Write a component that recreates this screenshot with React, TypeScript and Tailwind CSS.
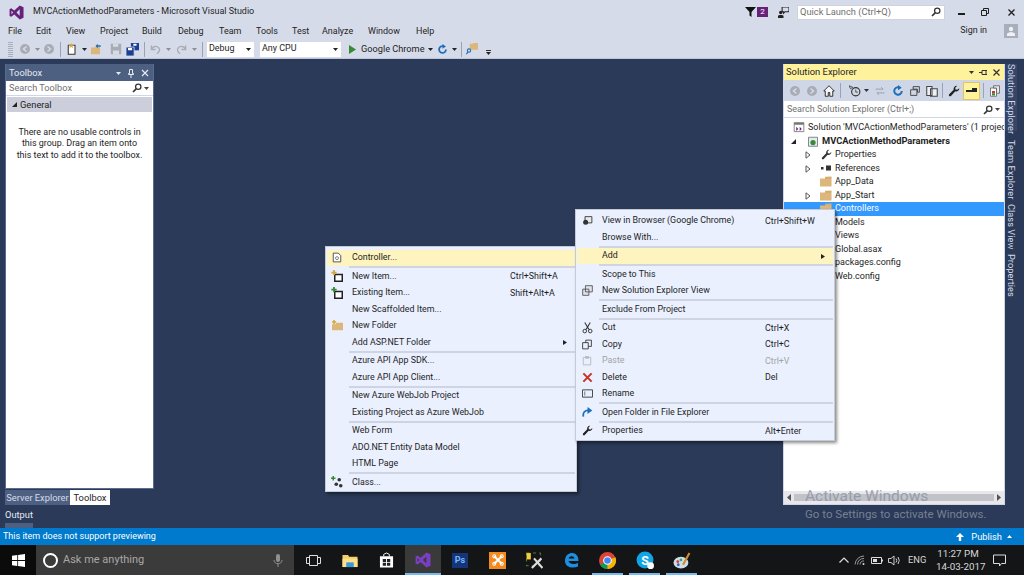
import React from "react";

const S = ({ w = 16, h = 16, vb = "0 0 16 16", className = "", children }: { w?: number; h?: number; vb?: string; className?: string; children?: React.ReactNode }) => (
  <svg width={w} height={h} viewBox={vb} className={"shrink-0 " + className}>{children}</svg>
);

const VSLogo = ({ s = 16, c = "#68217a" }: { s?: number; c?: string }) => (
  <S w={s} h={s}>
    <path fillRule="evenodd" fill={c} d="M11.5 0.5 L15.5 2.3 V13.7 L11.5 15.5 L5.6 10.2 L2.4 12.6 L0.6 11.6 V4.4 L2.4 3.4 L5.6 5.8 Z M11.4 4.6 L8 8 L11.4 11.4 Z M2.6 6.2 V9.8 L4.4 8 Z" />
  </S>
);

const Drop = ({ c = "#444" }: { c?: string }) => (
  <S w={5} h={3} vb="0 0 5 3"><path d="M0 0H5L2.5 3Z" fill={c} /></S>
);

const Magnifier = ({ s = 11, c = "#444" }: { s?: number; c?: string }) => (
  <S w={s} h={s} vb="0 0 12 12">
    <circle cx="7.5" cy="4.5" r="3.2" fill="none" stroke={c} strokeWidth="1.5" />
    <path d="M5 7L1.2 10.8" stroke={c} strokeWidth="2" />
  </S>
);

const Wrench = ({ s = 12, c = "#333" }: { s?: number; c?: string }) => (
  <S w={s} h={s}>
    <path d="M15 4.2a4 4 0 0 1-5.3 4.2L4 14.5a1.6 1.6 0 0 1-2.4-2.3L7.6 6.3A4 4 0 0 1 12 1.2L9.6 3.6l.4 2.4 2.4.4z" fill={c} />
  </S>
);

const Folder = ({ c = "#dcb67a" }: { c?: string }) => (
  <S w={12} h={11} vb="0 0 12 11">
    <path d="M0 2.5H5V0.8L11.5 0.5V10.5H0Z" fill={c} />
    <path d="M5 1.2H11.5V2.6H5Z" fill="#c9a164" opacity="0.5" />
  </S>
);

const Tri = () => (
  <S w={6} h={8} vb="0 0 6 8"><path d="M1 0.8L5 4L1 7.2Z" fill="#fff" stroke="#555" /></S>
);

const Sep = () => <div className="w-px h-[15px] bg-[#9aa3b6] shrink-0" />;

const Slot = ({ w, children }: { w: number; children?: React.ReactNode }) => (
  <div className="flex items-center justify-center shrink-0" style={{ width: w }}>{children}</div>
);

const CircleArrow = ({ dir = "l" }: { dir?: "l" | "r" }) => (
  <S w={10} h={10} vb="0 0 10 10">
    <circle cx="5" cy="5" r="5" fill="#a8acb5" />
    <path d={dir === "l" ? "M6.5 2.5L3.5 5L6.5 7.5" : "M3.5 2.5L6.5 5L3.5 7.5"} stroke="#d6dbe9" strokeWidth="1.5" fill="none" />
  </S>
);

const TopMenu = () => {
  const items: [string, number][] = [["File", 28], ["Edit", 30], ["View", 34], ["Project", 42], ["Build", 36], ["Debug", 41], ["Team", 37], ["Tools", 36], ["Test", 30], ["Analyze", 46], ["Window", 48], ["Help", 30]];
  return (
    <div className="flex h-[15px] pl-[8px] items-center">
      {items.map(([t, w]) => (
        <div key={t} className="text-[#1e1e1e] leading-[15px]" style={{ width: w }}>{t}</div>
      ))}
    </div>
  );
};

const Toolbar = () => (
  <div className="flex items-center h-[20px] pl-[8px]">
    <div className="w-[5px] h-[15px] bg-[repeating-linear-gradient(0deg,#a9aebb_0,#a9aebb_1px,transparent_1px,transparent_2px)] shrink-0" />
    <Slot w={5} />
    <Slot w={13}><CircleArrow /></Slot>
    <Slot w={12}><Drop c="#8e8e95" /></Slot>
    <Slot w={12}><CircleArrow dir="r" /></Slot>
    <Slot w={5} />
    <Sep />
    <Slot w={5} />
    <Slot w={12}>
      <S w={12} h={12}>
        <path d="M3 3H12V15H3Z" fill="#fff" stroke="#333" strokeWidth="1.4" />
        <path d="M7 0L8 2.5H11L8.6 4L9.6 7L7 5L4.4 7L5.4 4L3 2.5H6Z" fill="#d9a63a" />
      </S>
    </Slot>
    <Slot w={13}><Drop c="#222" /></Slot>
    <Slot w={12}>
      <S w={12} h={12}>
        <path d="M0 6H5L6 5H12V15H0Z" fill="#dcb67a" />
        <path d="M6 4L9 1V3H13V5H9V7Z" fill="#1c6fb8" />
      </S>
    </Slot>
    <Slot w={7} />
    <Slot w={12}>
      <S w={12} h={12}>
        <path d="M1 1H15V15H1Z" fill="#a8acb5" />
        <path d="M4 1H11V5H4ZM4 10H12V15H4Z" fill="#d6dbe9" />
      </S>
    </Slot>
    <Slot w={4} />
    <Slot w={13}>
      <S w={13} h={13}>
        <path d="M6 0H16V9H6Z" fill="#1c3f94" />
        <path d="M0 5H10V16H0Z" fill="#1c3f94" stroke="#d6dbe9" />
        <path d="M2.5 6H7.5V9H2.5ZM9 1H13V3.5H9Z" fill="#fff" />
      </S>
    </Slot>
    <Slot w={5} />
    <Sep />
    <Slot w={5} />
    <Slot w={11}>
      <S w={11} h={11}><path d="M2 2V8H8M2 8C4 3 10 2 13 6C15 9 13 12 10 14" fill="none" stroke="#a8acb5" strokeWidth="2" /></S>
    </Slot>
    <Slot w={15}><Drop c="#8e8e95" /></Slot>
    <Slot w={11}>
      <S w={11} h={11}><path d="M14 2V8H8M14 8C12 3 6 2 3 6C1 9 3 12 6 14" fill="none" stroke="#a8acb5" strokeWidth="2" /></S>
    </Slot>
    <Slot w={15}><Drop c="#8e8e95" /></Slot>
    <Sep />
    <Slot w={4} />
    <div className="w-[47px] h-[15px] bg-white flex items-center justify-between pl-[2px] pr-[3px] shrink-0 text-[#1e1e1e]"><span>Debug</span><Drop c="#222" /></div>
    <Slot w={6} />
    <div className="w-[81px] h-[15px] bg-white flex items-center justify-between pl-[2px] pr-[3px] shrink-0 text-[#1e1e1e]"><span>Any CPU</span><Drop c="#222" /></div>
    <Slot w={8} />
    <S w={7} h={9} vb="0 0 7 9"><path d="M0 0L7 4.5L0 9Z" fill="#388a34" /></S>
    <Slot w={5} />
    <span className="w-[64px] shrink-0 text-[#1e1e1e] whitespace-nowrap text-[9.2px]">Google Chrome</span>
    <Slot w={11}><Drop c="#222" /></Slot>
    <Slot w={12}>
      <S w={11} h={11}><path d="M13 8a5 5 0 1 1-3.5-4.8" fill="none" stroke="#1c6fb8" strokeWidth="2.6" /><path d="M8 0L13 3.5L8 7Z" fill="#1c6fb8" /></S>
    </Slot>
    <Slot w={13}><Drop c="#222" /></Slot>
    <Sep />
    <Slot w={4} />
    <Slot w={12}>
      <S w={12} h={12}>
        <path d="M5 1H9L10 0H16V9H5Z" fill="#dcb67a" />
        <circle cx="4" cy="10" r="2.2" fill="none" stroke="#1c6fb8" strokeWidth="1.4" />
        <path d="M2.5 12L0.5 15" stroke="#1c6fb8" strokeWidth="1.6" />
      </S>
    </Slot>
    <Slot w={7} />
    <div className="flex flex-col items-center gap-[1px] pt-[7px] w-[6px] shrink-0">
      <div className="w-[5px] h-px bg-[#333]" />
      <Drop c="#222" />
    </div>
  </div>
);

const Chrome = () => (
  <div className="h-[59px] bg-[#d6dbe9] shrink-0 border-b border-[#bdc5d8] text-[8.95px] relative">
    <div className="h-[24px] flex items-center">
      <div className="w-[33px] pl-[9px] pt-[1px]"><VSLogo s={15} /></div>
      <div className="text-[#1e1e1e] w-[712px] whitespace-nowrap">MVCActionMethodParameters - Microsoft Visual Studio</div>
      <S w={11} h={10} vb="0 0 11 10"><path d="M0 0H11L6.5 5V10L4.5 8.5V5Z" fill="#111" /></S>
      <div className="w-[11px] h-[10px] bg-[#68217a] text-white text-[8px] leading-[10px] text-center ml-[1px]">2</div>
      <div className="w-[10px]" />
      <S w={11} h={11}>
        <path d="M6 0H16V7H10L8 9V7H6Z" fill="none" stroke="#222" strokeWidth="1.5" />
        <circle cx="4" cy="8" r="2.5" fill="#222" />
        <path d="M0 16V13C0 11 8 11 8 13V16Z" fill="#222" />
      </S>
      <div className="w-[8px]" />
      <div className="w-[148px] h-[15px] bg-white border border-[#cfd3dd] flex items-center justify-between pl-[2px] pr-[3px] text-[#717171] text-[9.3px]">
        <span>Quick Launch (Ctrl+Q)</span>
        <Magnifier s={10} c="#333" />
      </div>
      <div className="w-[9px]" />
      <Slot w={14}><div className="w-[7px] h-[2px] bg-[#1e1e1e] mt-[4px]" /></Slot>
      <Slot w={10} />
      <Slot w={14}>
        <S w={8} h={8} vb="0 0 8 8"><path d="M2.5 2.5V0.5H7.5V5.5H5.5M0.5 2.5H5.5V7.5H0.5Z" fill="none" stroke="#1e1e1e" /></S>
      </Slot>
      <Slot w={12} />
      <Slot w={14}>
        <S w={7} h={7} vb="0 0 7 7"><path d="M0.5 0.5L6.5 6.5M6.5 0.5L0.5 6.5" stroke="#1e1e1e" strokeWidth="1.3" /></S>
      </Slot>
    </div>
    <TopMenu />
    <Toolbar />
    <div className="absolute right-[6px] top-[24px] flex items-center gap-[17px]">
      <span className="text-[#1e1e1e]">Sign in</span>
      <div className="w-[14px] h-[14px] bg-[#a9aebb] flex items-center justify-center">
        <S w={10} h={10} vb="0 0 10 10"><circle cx="5" cy="3" r="2.2" fill="#eef0f5" /><path d="M1 10V7.5Q5 4.5 9 7.5V10Z" fill="#eef0f5" /></S>
      </div>
    </div>
  </div>
);

const Toolbox = () => (
  <div className="w-[154px] pl-[5px] pt-[5px] shrink-0 flex flex-col">
    <div className="h-[425px] flex flex-col bg-white border border-[#5a6c8e] border-t-0 text-[8.95px]">
      <div className="h-[17px] bg-[#4d6082] flex items-center pl-[3px] pr-[4px] pt-px text-[#e6eaf3] shrink-0 text-[9.3px]">
        <span className="flex-1">Toolbox</span>
        <Drop c="#e6eaf3" />
        <S w={8} h={9} vb="0 0 8 9" className="ml-[6px]"><path d="M2.5 0.5H5.5V4.5H6.5V5.5H1.5V4.5H2.5ZM4 5.5V9" fill="none" stroke="#e6eaf3" /></S>
        <S w={8} h={8} vb="0 0 8 8" className="ml-[6px]"><path d="M1 1L7 7M7 1L1 7" stroke="#e6eaf3" strokeWidth="1.2" /></S>
      </div>
      <div className="h-[15px] bg-white flex items-center pl-[3px] pr-[4px] border-b border-[#cfd6e5] text-[#717171] shrink-0 text-[9.2px]">
        <span className="flex-1">Search Toolbox</span>
        <Magnifier s={10} c="#333" />
        <div className="ml-[2px]"><Drop c="#444" /></div>
      </div>
      <div className="h-[15px] mt-[1px] mx-px bg-[#ccceDB] flex items-center pl-[5px] text-[#1e1e1e] shrink-0 text-[9.3px]">
        <S w={5} h={5} vb="0 0 5 5"><path d="M5 0V5H0Z" fill="#222" /></S>
        <span className="ml-[3px]">General</span>
      </div>
      <div className="pt-[15px] text-center text-[#1e1e1e] leading-[11.4px] whitespace-nowrap">
        There are no usable controls in<br />this group. Drag an item onto<br />this text to add it to the toolbox.
      </div>
    </div>
    <div className="flex h-[15px] text-[9.3px] mt-px">
      <div className="w-[65px] bg-[#4d6082] text-[#d6dbe9] flex items-center justify-center whitespace-nowrap">Server Explorer</div>
      <div className="w-[40px] bg-white text-[#1e1e1e] flex items-center justify-center">Toolbox</div>
    </div>
    <div className="text-[#e6eaf3] text-[9.3px] h-[12px] mt-[4px] leading-[12px]">Output</div>
    <div className="w-[28px] h-[6px] bg-[#4d6082] mt-[2px]" />
  </div>
);

const Row = ({ arrow, icon, text, bold, sel, x = 835 }: { arrow?: boolean; icon?: React.ReactNode; text: string; bold?: boolean; sel?: boolean; x?: number }) => (
  <div className={"h-[13.5px] flex items-center relative whitespace-nowrap " + (sel ? "bg-[#3399ff] text-white" : "text-[#1e1e1e]")} style={{ paddingLeft: x - 784 }}>
    {arrow && <div className="absolute left-[21px] top-[3px]"><Tri /></div>}
    {icon && <div className="absolute flex items-center justify-center w-[14px] top-0 h-[13px]" style={{ left: x - 784 - 16 }}>{icon}</div>}
    <span className={bold ? "font-bold text-[9.3px]" : ""}>{text}</span>
  </div>
);

const SolutionExplorer = () => (
  <div className="w-[222px] h-[441px] mt-[5px] shrink-0 bg-white flex flex-col text-[9px] overflow-hidden relative border-x border-b border-[#cfd6e5]">
    <div className="h-[16px] bg-[#fff29d] flex items-center pl-[2px] pr-[4px] pt-px text-[#1e1e1e] shrink-0 text-[9.4px]">
      <span className="flex-1">Solution Explorer</span>
      <Drop c="#333" />
      <S w={9} h={7} vb="0 0 9 7" className="ml-[5px]"><path d="M0 3.5H3M3 1.5V5.5H7V1.5ZM3 1.5H8M3 5.5H8" fill="none" stroke="#333" /></S>
      <S w={7} h={7} vb="0 0 7 7" className="ml-[5px]"><path d="M0.5 0.5L6.5 6.5M6.5 0.5L0.5 6.5" stroke="#333" strokeWidth="1.2" /></S>
    </div>
    <div className="h-[21px] bg-[#cfd6e5] flex items-center pl-[6px] shrink-0">
      <CircleArrow />
      <Slot w={7} />
      <CircleArrow dir="r" />
      <Slot w={6} />
      <S w={12} h={12}><path d="M8 1L15 8H13V15H9V10H7V15H3V8H1Z" fill="#f5f5f5" stroke="#222" strokeWidth="1.2" /></S>
      <Slot w={5} />
      <Sep />
      <Slot w={8} />
      <S w={12} h={12}><circle cx="9" cy="9" r="5.5" fill="none" stroke="#333" strokeWidth="1.5" /><path d="M9 6V9.5H12M0 1L5 3L2 5Z" fill="none" stroke="#333" /></S>
      <Slot w={3} />
      <Drop c="#333" />
      <Slot w={6} />
      <S w={10} h={10}><path d="M1 5H13L10 2M15 11H3L6 14" fill="none" stroke="#9aa0ac" strokeWidth="1.6" /></S>
      <Slot w={7} />
      <S w={12} h={12}><path d="M13 8a5 5 0 1 1-3.5-4.8" fill="none" stroke="#1c6fb8" strokeWidth="2.6" /><path d="M8 0L13 3.5L8 7Z" fill="#1c6fb8" /></S>
      <Slot w={6} />
      <S w={10} h={10}><path d="M5 1H15V10H12V5H5ZM1 6H11V15H1Z" fill="#cfd6e5" stroke="#444" strokeWidth="1.5" /></S>
      <Slot w={6} />
      <S w={12} h={12}><path d="M1 2H8V14H1ZM6 5H15V15H6Z" fill="#eef0f5" stroke="#444" strokeWidth="1.4" /></S>
      <Slot w={4} />
      <Sep />
      <Slot w={5} />
      <Wrench s={12} c="#222" />
      <Slot w={3} />
      <div className="w-[17px] h-[18px] bg-[#fff29d] border border-[#e5c365] flex items-center justify-center">
        <div className="w-[11px] h-[2px] bg-[#222] relative"><div className="absolute right-0 -top-[2px] w-[5px] h-[2px] bg-[#222]" /></div>
      </div>
      <Slot w={3} />
      <Sep />
      <Slot w={5} />
      <S w={12} h={12}><path d="M2 4H10V15H2Z" fill="#fff" stroke="#555" /><path d="M6 1H14V11H10V4H6Z" fill="#e8e8ee" stroke="#555" /><path d="M4 8H8V11H4Z" fill="#c33" /><path d="M4 11H8V14H4Z" fill="#388a34" /></S>
    </div>
    <div className="h-[17px] bg-white flex items-center pl-[3px] pr-[4px] pt-px border-b border-[#cfd6e5] text-[#717171] shrink-0">
      <span className="flex-1">Search Solution Explorer (Ctrl+;)</span>
      <Magnifier s={10} c="#333" />
      <div className="ml-[2px]"><Drop c="#444" /></div>
    </div>
    <div className="pt-[3px] flex-1 overflow-hidden">
      <Row x={808} text="Solution 'MVCActionMethodParameters' (1 project)" icon={
        <S w={12} h={11}><path d="M1 1H15V14H1Z" fill="#fff" stroke="#555" /><path d="M1 1H15V4H1Z" fill="#777" /><path d="M4 7L7 10L4 13ZM9 7L12 10L9 13Z" fill="#68217a" /></S>} />
      <Row x={822} bold text="MVCActionMethodParameters" icon={
        <S w={12} h={12}><path d="M2 3H14V15H2Z" fill="#e5ecec" stroke="#567" /><circle cx="8" cy="10" r="3.5" fill="#388a34" /></S>} />
      <div className="absolute left-[7px] top-[75px]"><S w={5} h={5} vb="0 0 5 5"><path d="M5 0V5H0Z" fill="#222" /></S></div>
      <Row arrow text="Properties" icon={<Wrench s={11} c="#333" />} />
      <Row arrow text="References" icon={<S w={10} h={6} vb="0 0 10 6"><rect x="0" y="2" width="2.5" height="2.5" fill="#333" /><rect x="5" y="0.5" width="5" height="5" fill="#333" /></S>} />
      <Row text="App_Data" icon={<Folder />} />
      <Row arrow text="App_Start" icon={<Folder />} />
      <Row sel text="Controllers" icon={<Folder />} />
      <Row text="Models" />
      <Row text="Views" />
      <Row text="Global.asax" />
      <Row text="packages.config" />
      <Row text="Web.config" />
    </div>
    <div className="h-[13px] bg-[#e8e8ec] flex items-center shrink-0 px-[3px] gap-[3px]">
      <S w={4} h={7} vb="0 0 4 7"><path d="M4 0V7L0 3.5Z" fill="#555" /></S>
      <div className="flex-1 h-[7px] bg-[#c2c3c9]" />
      <S w={4} h={7} vb="0 0 4 7"><path d="M0 0V7L4 3.5Z" fill="#555" /></S>
    </div>
  </div>
);

const SideTab = ({ t, h, m, active }: { t: string; h: number; m: number; active?: boolean }) => (
  <div className={"w-[12px] whitespace-nowrap leading-[12px] [writing-mode:vertical-rl] " + (active ? "bg-[#35466a]" : "")} style={{ height: h, marginTop: m }}>{t}</div>
);

const SideTabs = () => (
  <div className="w-[19px] shrink-0 pt-[5px] flex flex-col text-[9.3px] text-[#d6dbe9]">
    <SideTab t="Solution Explorer" h={67} m={0} active />
    <SideTab t="Team Explorer" h={55} m={9} />
    <SideTab t="Class View" h={40} m={9} />
    <SideTab t="Properties" h={40} m={10} />
  </div>
);

type MI = { t?: string; k?: string; i?: React.ReactNode; hl?: boolean; sub?: boolean; dim?: boolean; sep?: boolean };

const Menu = ({ items, cls, textX, keyX }: { items: MI[]; cls: string; textX: number; keyX: number }) => (
  <div className={"absolute bg-[#eaf0fe] border border-[#c4cad8] pt-[2.5px] pb-[2px] pl-px pr-[1px] shadow-[2px_2px_3px_rgba(0,0,0,0.45)] text-[8.85px] " + cls}>
    {items.map((m, n) =>
      m.sep ? (
        <div key={n} className="h-[2px] flex items-center" style={{ paddingLeft: textX - 3 }}><div className="h-[2px] flex-1 bg-[#ced4e2]" /></div>
      ) : (
        <div key={n} className={"h-[16.5px] relative flex items-center whitespace-nowrap " + (m.hl ? "bg-[#fdf4bf] " : "") + (m.dim ? "text-[#a2a4a5]" : "text-[#1e1e1e]")} style={{ paddingLeft: textX }}>
          {m.i && <div className="absolute left-0 top-0 h-[16.5px] w-[20px] flex items-center justify-center">{m.i}</div>}
          <span>{m.t}</span>
          {m.k && <span className="absolute top-0 leading-[16.5px]" style={{ left: keyX }}>{m.k}</span>}
          {m.sub && <div className="absolute right-[8px] top-[6px]"><S w={4} h={5} vb="0 0 4 5"><path d="M0 0L4 2.5L0 5Z" fill="#222" /></S></div>}
        </div>
      )
    )}
  </div>
);

const NewPlus = ({ c = "#d9a63a" }: { c?: string }) => (
  <S w={12} h={12}>
    <path d="M5 6H15V15H5Z" fill="#fff" stroke="#222" strokeWidth="2" />
    <path d="M4 0V7M0.5 3.5H7.5" stroke={c} strokeWidth="2.4" />
  </S>
);

const submenu: MI[] = [
  { t: "Controller...", hl: true, i: <S w={10} h={11}><path d="M2 1H10L14 5V15H2Z" fill="#fff" stroke="#444" strokeWidth="1.4" /><circle cx="8" cy="9" r="2.4" fill="none" stroke="#444" /></S> },
  { sep: true },
  { t: "New Item...", k: "Ctrl+Shift+A", i: <NewPlus /> },
  { t: "Existing Item...", k: "Shift+Alt+A", i: <NewPlus c="#388a34" /> },
  { t: "New Scaffolded Item..." },
  { t: "New Folder", i: <S w={11} h={11}><path d="M0 6H5L6 4H16V15H0Z" fill="#dcb67a" /><path d="M3 0V6M0 3H6" stroke="#d9a63a" strokeWidth="2.2" /></S> },
  { t: "Add ASP.NET Folder", sub: true },
  { sep: true },
  { t: "Azure API App SDK..." },
  { t: "Azure API App Client..." },
  { sep: true },
  { t: "New Azure WebJob Project" },
  { t: "Existing Project as Azure WebJob" },
  { sep: true },
  { t: "Web Form" },
  { t: "ADO.NET Entity Data Model" },
  { t: "HTML Page" },
  { sep: true },
  { t: "Class...", i: <S w={12} h={12}><path d="M3 0V6M0 3H6" stroke="#388a34" strokeWidth="2" /><circle cx="11" cy="5" r="2.4" fill="#333" /><circle cx="7" cy="11" r="2.4" fill="#333" /><circle cx="13" cy="13" r="2.4" fill="#333" /></S> },
];

const ctx: MI[] = [
  { t: "View in Browser (Google Chrome)", k: "Ctrl+Shift+W", i: <S w={11} h={10}><path d="M4 1H15V11H4Z" fill="#e8e8ee" stroke="#333" strokeWidth="1.4" /><circle cx="5" cy="10" r="4" fill="#333" /></S> },
  { t: "Browse With..." },
  { sep: true },
  { t: "Add", hl: true, sub: true },
  { sep: true },
  { t: "Scope to This" },
  { t: "New Solution Explorer View", i: <S w={11} h={11}><path d="M5 1H15V10H5ZM1 6H10V15H1Z" fill="#dfe3ec" stroke="#555" strokeWidth="1.3" /></S> },
  { sep: true },
  { t: "Exclude From Project" },
  { sep: true },
  { t: "Cut", k: "Ctrl+X", i: <S w={11} h={12}><path d="M4 0L10 10M12 0L6 10" stroke="#333" strokeWidth="1.5" /><circle cx="4" cy="12.5" r="2.6" fill="none" stroke="#333" strokeWidth="1.4" /><circle cx="12" cy="12.5" r="2.6" fill="none" stroke="#333" strokeWidth="1.4" /></S> },
  { t: "Copy", k: "Ctrl+C", i: <S w={10} h={11}><path d="M6 1H15V11H6Z" fill="none" stroke="#333" strokeWidth="1.4" /><path d="M1 5H10V15H1Z" fill="#eaf0fe" stroke="#333" strokeWidth="1.4" /></S> },
  { t: "Paste", k: "Ctrl+V", dim: true, i: <S w={10} h={11}><path d="M2 3H14V15H2Z" fill="none" stroke="#b6b8bd" strokeWidth="1.4" /><path d="M5 1H11V5H5Z" fill="#b6b8bd" /></S> },
  { t: "Delete", k: "Del", i: <S w={11} h={11}><path d="M2 2L14 14M14 2L2 14" stroke="#c5352c" strokeWidth="3" /></S> },
  { t: "Rename", i: <S w={11} h={9} vb="0 0 16 12"><path d="M0.7 0.7H15.3V11.3H0.7Z" fill="#eaf0fe" stroke="#444" strokeWidth="1.4" /><path d="M4 3V9" stroke="#444" /></S> },
  { sep: true },
  { t: "Open Folder in File Explorer", i: <S w={11} h={11}><path d="M2 14C1 8 4 5 9 5" fill="none" stroke="#1c6fb8" strokeWidth="2.6" /><path d="M8 0L15 5L8 10Z" fill="#1c6fb8" /></S> },
  { sep: true },
  { t: "Properties", k: "Alt+Enter", i: <Wrench s={11} c="#222" /> },
];

const TaskIcon = ({ w, active, run, children }: { w: number; active?: boolean; run?: boolean; children?: React.ReactNode }) => (
  <div className={"h-full flex items-center justify-center shrink-0 relative " + (active ? "bg-[#3a3a3a]" : "")} style={{ width: w }}>
    {children}
    {(active || run) && <div className={"absolute bottom-0 h-[2px] bg-[#76b9ed] " + (active ? "left-0 right-0" : "left-[3px] right-[3px]")} />}
  </div>
);

const Taskbar = () => (
  <div className="h-[30px] bg-[#131516] flex items-stretch shrink-0 text-[#d8d8d8]">
    <div className="w-[36px] bg-[#0b0b0b] flex items-center justify-center">
      <S w={13} h={13}><path d="M0 2.2L6.5 1.3V7.5H0ZM7.5 1.1L16 0V7.5H7.5ZM0 8.5H6.5V14.7L0 13.8ZM7.5 8.5H16V16L7.5 14.9Z" fill="#fff" /></S>
    </div>
    <div className="w-[258px] bg-[#3b3b3b] flex items-center pl-[7px] pr-[11px]">
      <div className="w-[15px] h-[15px] rounded-full border-2 border-white shrink-0" />
      <span className="ml-[5px] pt-px text-[11px] text-[#a8a8a8] flex-1">Ask me anything</span>
      <S w={10} h={13} vb="0 0 10 13"><rect x="3" y="0" width="4" height="8" rx="2" fill="#8f8f8f" /><path d="M1 6C1 11 9 11 9 6M5 10V13" fill="none" stroke="#8f8f8f" /></S>
    </div>
    <Slot w={1} />
    <TaskIcon w={36}>
      <S w={15} h={11} vb="0 0 15 11"><path d="M3.5 0.5H11.5V10.5H3.5ZM3.5 2.5H0.5V8.5H3.5M11.5 2.5H14.5V8.5H11.5" fill="none" stroke="#ddd" /></S>
    </TaskIcon>
    <TaskIcon w={37}>
      <S w={16} h={15}><path d="M0 2H6L7 4H16V15H0Z" fill="#f5cf6b" /><path d="M0 6H16V15H0Z" fill="#fbe08a" /><path d="M4 10H12V15H4Z" fill="#3a96dd" /></S>
    </TaskIcon>
    <TaskIcon w={37}>
      <S w={15} h={16}><path d="M1 4H15V16H1Z" fill="#fff" /><path d="M5 4V2Q8 -1 11 2V4" fill="none" stroke="#fff" /><path d="M4 7H7.5V10.2H4ZM8.5 7H12V10.2H8.5ZM4 11H7.5V14H4ZM8.5 11H12V14H8.5Z" fill="#222" /></S>
    </TaskIcon>
    <TaskIcon w={36} active><VSLogo s={16} c="#7a3fc0" /></TaskIcon>
    <TaskIcon w={38}>
      <div className="w-[16px] h-[15px] bg-[#15357a] text-[#7ab4f5] text-[9px] font-bold leading-[15px] text-center">Ps</div>
    </TaskIcon>
    <TaskIcon w={37}>
      <div className="w-[17px] h-[17px] bg-[#f28a1f] flex items-center justify-center">
        <S w={12} h={12}><path d="M3 3L13 13M13 3L3 13" stroke="#fff" strokeWidth="2.4" /><circle cx="3" cy="3" r="2" fill="none" stroke="#fff" strokeWidth="1.4" /><circle cx="13" cy="3" r="2" fill="none" stroke="#fff" strokeWidth="1.4" /><circle cx="3" cy="13" r="2" fill="none" stroke="#fff" strokeWidth="1.4" /><circle cx="13" cy="13" r="2" fill="none" stroke="#fff" strokeWidth="1.4" /></S>
      </div>
    </TaskIcon>
    <TaskIcon w={36}>
      <S w={18} h={17}><path d="M1 1H14V13H1Z" fill="none" stroke="#4f7a3a" strokeDasharray="3 3" /><path d="M1 1H5V7H1Z" fill="#f5cf3b" /><path d="M6 15L15 6M8 6L16 15" stroke="#ddd" strokeWidth="2" /></S>
    </TaskIcon>
    <TaskIcon w={37}>
      <S w={16} h={16}><path d="M2 9C2 3 6 1 9 1C13 1 15.5 4 15.5 9H5.5C6 12 11 13 15 11V14.5C9 17 2 15 2 9ZM5.5 6.5H11.5C11 3.5 6.5 3.5 5.5 6.5Z" fill="#1d8fe0" /></S>
    </TaskIcon>
    <TaskIcon w={37} run>
      <S w={17} h={17}>
        <circle cx="8" cy="8" r="8" fill="#db4437" />
        <path d="M8 8L1 12A8 8 0 0 0 8 16Z" fill="#0f9d58" />
        <path d="M8 8L8 16A8 8 0 0 0 15.5 5Z" fill="#f4b400" />
        <circle cx="8" cy="8" r="3.6" fill="#4285f4" stroke="#fff" />
      </S>
    </TaskIcon>
    <TaskIcon w={37} run>
      <S w={18} h={18}><circle cx="8" cy="8" r="7.5" fill="#10a5e8" /><text x="8" y="12" textAnchor="middle" fontSize="11" fontWeight="700" fill="#fff" fontFamily="Roboto">S</text><circle cx="13" cy="13" r="3" fill="#fff" /></S>
    </TaskIcon>
    <TaskIcon w={37} run>
      <S w={18} h={17}><ellipse cx="7" cy="10" rx="7" ry="5.5" fill="#cfdde8" /><circle cx="4" cy="9" r="1.3" fill="#d33" /><circle cx="7" cy="7.5" r="1.3" fill="#3a6" /><circle cx="4.5" cy="12" r="1.3" fill="#36c" /><path d="M15 1L9 12" stroke="#d08a2f" strokeWidth="2" /></S>
    </TaskIcon>
    <div className="flex-1" />
    <div className="flex items-center pr-0">
      <S w={10} h={6} vb="0 0 10 6"><path d="M0.5 5.5L5 1L9.5 5.5" fill="none" stroke="#ddd" strokeWidth="1.2" /></S>
      <Slot w={5} />
      <S w={11} h={10} vb="0 0 11 10"><path d="M1 9.5A9 9 0 0 1 10 1M3.5 9.5A6 6 0 0 1 10 3.5M6 9.5A3.5 3.5 0 0 1 10 6" fill="none" stroke="#999" /><circle cx="9.5" cy="9" r="1" fill="#ddd" /></S>
      <Slot w={6} />
      <S w={12} h={7} vb="0 0 12 7"><path d="M0.5 0.5H10.5V6.5H0.5Z" fill="none" stroke="#ddd" /><path d="M2 2H6V5H2Z" fill="#ddd" /><path d="M11 2.5H12V4.5H11Z" fill="#ddd" /></S>
      <Slot w={5} />
      <S w={13} h={11} vb="0 0 13 11"><path d="M0.5 3.5H3L6 1V10L3 7.5H0.5Z" fill="none" stroke="#ccc" /><path d="M8 3.5Q9.5 5.500 8 7.5M10 2Q12.5 5.500 10 9" fill="none" stroke="#ccc" /></S>
      <Slot w={7} />
      <span className="text-[9.3px] w-[17px]">ENG</span>
      <Slot w={11} />
      <div className="w-[44px] text-center text-[9.8px] leading-[13px] whitespace-nowrap">
        <div>11:27 PM</div>
        <div>14-03-2017</div>
      </div>
      <Slot w={13} />
      <S w={13} h={13} vb="0 0 13 13"><path d="M0.5 1H12.5V9.5H8.5L6.5 12L6.5 9.5H0.5Z" fill="none" stroke="#ddd" /></S>
      <Slot w={18} />
    </div>
  </div>
);

export default function App() {
  return (
    <div className="w-[1024px] h-[575px] flex flex-col overflow-hidden relative font-['Roboto','Open_Sans',sans-serif] bg-[#2a3a58]">
      <Chrome />
      <div className="flex-1 flex items-start min-h-0">
        <Toolbox />
        <div className="flex-1" />
        <SolutionExplorer />
        <SideTabs />
      </div>
      <div className="h-[17px] bg-[#007acc] flex items-center shrink-0 pl-[3px] pr-[12px] text-[9px] text-white">
        <span className="flex-1">This item does not support previewing</span>
        <S w={8} h={8} vb="0 0 8 8"><path d="M4 0L8 4H5.2V8H2.8V4H0Z" fill="#fff" /></S>
        <span className="ml-[7px] text-[9.3px]">Publish</span>
        <div className="ml-[5px] rotate-180"><Drop c="#fff" /></div>
      </div>
      <Taskbar />
      <Menu items={submenu} cls="left-[325px] top-[246px] w-[252px] h-[246px]" textX={25} keyX={183} />
      <Menu items={ctx} cls="left-[575px] top-[209px] w-[260px] h-[232px]" textX={25} keyX={188} />
      <div className="absolute left-[805px] top-[486px] text-[#8a92a3] opacity-80 pointer-events-none">
        <div className="text-[15.5px] leading-[20px] whitespace-nowrap">Activate Windows</div>
        <div className="text-[11.5px] leading-[15px] mt-[1px] whitespace-nowrap">Go to Settings to activate Windows.</div>
      </div>
    </div>
  );
}
